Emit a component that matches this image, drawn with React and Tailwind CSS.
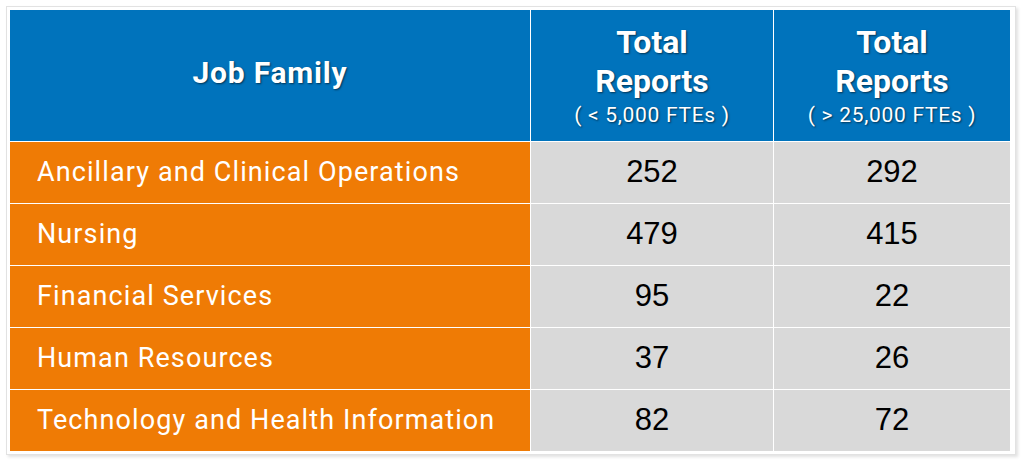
import React from "react";

const rows = [
  ["Ancillary and Clinical Operations", "252", "292"],
  ["Nursing", "479", "415"],
  ["Financial Services", "95", "22"],
  ["Human Resources", "37", "26"],
  ["Technology and Health Information", "82", "72"],
];

const shadow = "[text-shadow:1px_1px_2px_rgba(0,0,0,0.55)]";

export default function App() {
  return (
    <div className="w-[1024px] h-[462px] bg-white font-['Roboto',sans-serif]">
      <div className="ml-[6px] mt-[6px] w-[1010px] border border-[#e2e2e2] bg-white p-[3px] shadow-[2px_2px_3px_rgba(0,0,0,0.12)]">
        <div className="grid grid-cols-[520px_242px_236px] gap-px bg-white">
          <div className="h-[131px] bg-[#0073bc] flex items-center justify-center pb-[6px]">
            <span className={`text-white font-bold text-[30px] tracking-[0.8px] ${shadow}`}>Job Family</span>
          </div>
          {["<", ">"].map((sym, i) => (
            <div key={i} className="h-[131px] bg-[#0073bc] flex flex-col items-center justify-center text-white">
              <span className={`font-bold text-[32px] leading-[39px] ${shadow}`}>Total</span>
              <span className={`font-bold text-[32px] leading-[39px] ${shadow}`}>Reports</span>
              <span className={`text-[21px] leading-[28px] tracking-[0.7px] ${shadow}`}>
                {i === 0 ? "( < 5,000 FTEs )" : "( > 25,000 FTEs )"}
              </span>
            </div>
          ))}
          {rows.map(([name, a, b]) => (
            <React.Fragment key={name}>
              <div className="h-[61px] bg-[#ef7b05] flex items-center pl-[27px] text-white text-[27px] tracking-[1.1px]">
                {name}
              </div>
              <div className="h-[61px] bg-[#d9d9d9] flex items-center justify-center text-black text-[31px] font-['Liberation_Sans',sans-serif]">
                {a}
              </div>
              <div className="h-[61px] bg-[#d9d9d9] flex items-center justify-center text-black text-[31px] font-['Liberation_Sans',sans-serif]">
                {b}
              </div>
            </React.Fragment>
          ))}
        </div>
      </div>
    </div>
  );
}
